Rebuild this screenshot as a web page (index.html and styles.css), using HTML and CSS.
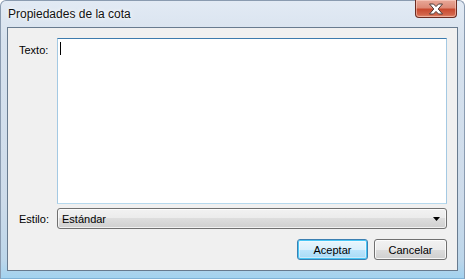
FILE: index.html
```html
<!DOCTYPE html>
<html lang="es">
<head>
<meta charset="utf-8">
<title>Propiedades de la cota</title>
<link rel="stylesheet" href="styles.css">
</head>
<body>
<div class="window">
  <div class="titlebar">
    <span class="title">Propiedades de la cota</span>
    <button class="close" aria-label="Cerrar">
      <svg width="16" height="12" viewBox="0 0 16 12">
        <path d="M1.5 1 H5.5 L8 3.6 L10.5 1 H14.5 L10.2 6 L14.5 11 H10.5 L8 8.4 L5.5 11 H1.5 L5.8 6 Z" fill="#ffffff" stroke="#4e3a36" stroke-width="1" stroke-linejoin="round"/>
      </svg>
    </button>
  </div>
  <div class="client">
    <div class="form">
      <label class="label label-top">Texto:</label>
      <div class="textbox"><span class="caret"></span></div>
      <label class="label">Estilo:</label>
      <div class="combo">
        <span class="combo-text">Estándar</span>
        <svg class="arrow" width="7" height="4" viewBox="0 0 7 4"><path d="M0 0 H7 L3.5 4 Z" fill="#000"/></svg>
      </div>
    </div>
    <div class="buttons">
      <button class="btn btn-default">Aceptar</button>
      <button class="btn">Cancelar</button>
    </div>
  </div>
</div>
</body>
</html>
```
FILE: styles.css
```css
html, body {
  margin: 0;
  padding: 0;
  background: #ffffff;
}
.window {
  width: 465px;
  height: 279px;
  box-sizing: border-box;
  border-radius: 6px 6px 0 0;
  border: 1px solid #8a9bb0;
  border-bottom-color: #7fb2d6;
  background: linear-gradient(to bottom, #e2eaf4 0px, #d7e2ee 40px, #cddbea 200px, #bcd6ea 260px, #9fd2f0 279px);
  display: flex;
  flex-direction: column;
  font-family: "Liberation Sans", Arial, sans-serif;
  font-size: 11px;
  color: #000;
}
.titlebar {
  height: 26px;
  display: flex;
  align-items: flex-start;
  justify-content: space-between;
  padding-left: 7px;
  padding-right: 6px;
}
.title {
  font-size: 12px;
  margin-top: 6px;
  color: #111;
  text-shadow: 0 0 6px #ffffff, 0 0 3px #ffffff;
}
.close {
  width: 42px;
  height: 18px;
  margin: -1px 1px 0 0;
  padding: 0;
  border: 1px solid #6b2c22;
  border-top: none;
  border-radius: 0 0 4px 4px;
  background: linear-gradient(to bottom, #e8a898 0%, #dd8a77 45%, #c84a30 55%, #d2644a 85%, #e08a6e 100%);
  box-shadow: inset 0 0 0 1px rgba(255, 220, 210, 0.5);
  display: flex;
  align-items: center;
  justify-content: center;
}
.client {
  flex: 1;
  margin: 0 6px 7px 6px;
  border: 1px solid #687b8f;
  background: #f0f0f0;
  padding: 10px;
  display: flex;
  flex-direction: column;
  gap: 10px;
}
.form {
  display: grid;
  grid-template-columns: 39px 1fr;
  grid-template-rows: 166px 21px;
  row-gap: 4px;
}
.label {
  padding-left: 1px;
  align-self: center;
}
.label-top {
  align-self: start;
  margin-top: 6px;
}
.textbox {
  box-sizing: border-box;
  background: #ffffff;
  border: 1px solid #a4c9e3;
  border-top-color: #3d7bad;
  border-bottom-color: #b7d9ed;
  padding: 3px 2px;
}
.caret {
  display: block;
  width: 1px;
  height: 13px;
  background: #000;
}
.combo {
  box-sizing: border-box;
  border: 1px solid #707070;
  border-radius: 3px;
  background: linear-gradient(to bottom, #f2f2f2 0%, #ebebeb 50%, #dddddd 50%, #cfcfcf 100%);
  box-shadow: inset 0 0 0 1px rgba(255, 255, 255, 0.7);
  display: flex;
  align-items: center;
  justify-content: space-between;
  padding: 0 6px 0 4px;
}
.arrow {
  display: block;
}
.buttons {
  display: flex;
  justify-content: flex-end;
  gap: 6px;
}
.btn {
  box-sizing: border-box;
  height: 21px;
  width: 73px;
  padding: 0;
  font-family: "Liberation Sans", Arial, sans-serif;
  font-size: 11px;
  color: #000;
  border: 1px solid #707070;
  border-radius: 3px;
  background: linear-gradient(to bottom, #f2f2f2 0%, #ebebeb 50%, #dddddd 50%, #cfcfcf 100%);
  box-shadow: inset 0 0 0 1px rgba(255, 255, 255, 0.8);
}
.btn-default {
  width: 71px;
  border-color: #3c7fb1;
  background: linear-gradient(to bottom, #eaf6fd 0%, #d9f0fc 50%, #bee6fd 50%, #a7d9f5 100%);
  box-shadow: inset 0 0 0 1px #48c6f5, inset 0 0 0 2px rgba(255, 255, 255, 0.4);
}
```
